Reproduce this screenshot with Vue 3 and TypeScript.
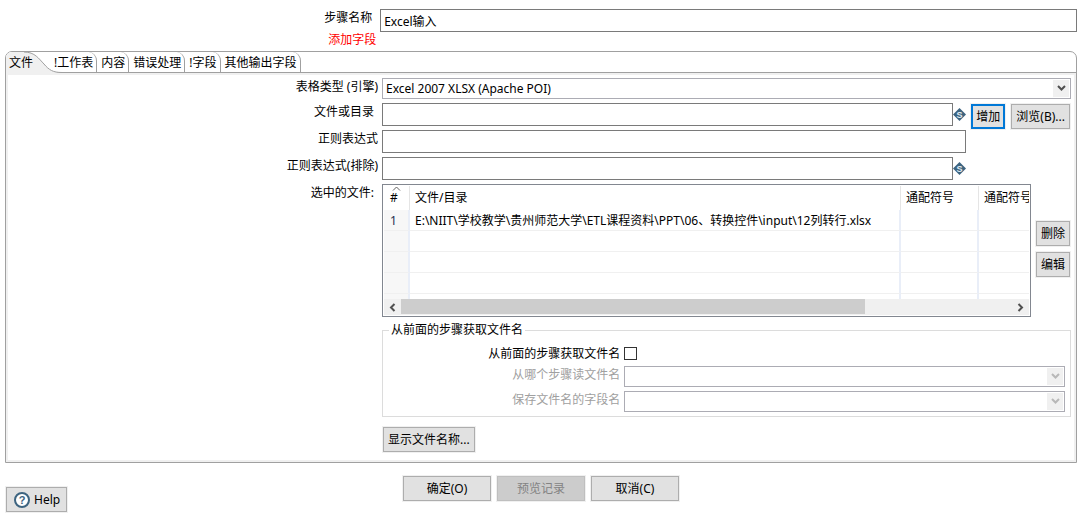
<script setup lang="ts">
import { ref } from 'vue'

interface FileRow {
  path: string
  mask: string
  exclude: string
}

const stepName = ref('Excel输入')
const engine = ref('Excel 2007 XLSX (Apache POI)')
const fileOrDir = ref('')
const mask = ref('')
const excludeMask = ref('')
const acceptFromStep = ref(false)
const tabs: string[] = ['!工作表', '内容', '错误处理', '!字段', '其他输出字段']
const rows: FileRow[] = [
  { path: 'E:\\NIIT\\学校教学\\贵州师范大学\\ETL课程资料\\PPT\\06、转换控件\\input\\12列转行.xlsx', mask: '', exclude: '' },
]
const emptyRows = 4
</script>

<template>
  <main class="dialog">
    <div class="line">
      <label class="lbl far" for="step">步骤名称</label>
      <input id="step" v-model="stepName" class="text" type="text" />
    </div>
    <div class="line note"><span class="lbl">添加字段</span></div>

    <section class="folder">
      <div class="tabs" role="tablist">
        <button class="tab active" role="tab" aria-selected="true" type="button">
          <svg class="curve" width="56" height="22" viewBox="0 0 56 22" aria-hidden="true">
            <path d="M0 0H20C29 0 33 7 38 12C43 18 47 20.500 56 20.500V22H0Z" fill="#f0f0f0" />
            <path d="M18 0C29 0 33 7 38 12C43 18 47 20.500 56 20.500" fill="none" stroke="#a0a0a0" />
          </svg>
          <span>文件</span>
        </button>
        <button v-for="t in tabs" :key="t" class="tab" role="tab" aria-selected="false" type="button">{{ t }}</button>
        <div class="rest"></div>
      </div>

      <div class="panel">
        <div class="line">
          <label class="lbl" for="engine">表格类型 (引擎)</label>
          <div class="combo">
            <select id="engine" v-model="engine"><option>Excel 2007 XLSX (Apache POI)</option></select>
            <span class="drop"><svg width="9" height="7" viewBox="0 0 9 7"><path d="M1 1L4.500 4.500L8 1" /></svg></span>
          </div>
        </div>

        <div class="sources">
          <label class="lbl far" for="file">文件或目录</label>
          <div class="var">
            <input id="file" v-model="fileOrDir" class="text" type="text" />
            <svg width="13" height="13" viewBox="0 0 13 13"><path d="M6.500 0L13 6.500L6.500 13L0 6.500Z" fill="#3d6480" /><text x="6.500" y="10" text-anchor="middle">S</text></svg>
          </div>
          <div class="actions">
            <button class="btn focus" type="button">增加</button>
            <button class="btn" type="button">浏览(B)...</button>
          </div>
          <label class="lbl" for="mask">正则表达式</label>
          <input id="mask" v-model="mask" class="text" type="text" />
          <label class="lbl" for="exclude">正则表达式(排除)</label>
          <div class="var">
            <input id="exclude" v-model="excludeMask" class="text" type="text" />
            <svg width="13" height="13" viewBox="0 0 13 13"><path d="M6.500 0L13 6.500L6.500 13L0 6.500Z" fill="#3d6480" /><text x="6.500" y="10" text-anchor="middle">S</text></svg>
          </div>
        </div>

        <div class="line">
          <span id="files-label" class="lbl far">选中的文件:</span>
          <div class="files">
            <div class="grid">
              <div class="view">
                <table aria-labelledby="files-label">
                  <colgroup><col class="c-num" /><col /><col class="c-mask" /><col class="c-mask" /></colgroup>
                  <thead>
                    <tr>
                      <th class="num">
                        <svg class="sort" width="9" height="5" viewBox="0 0 9 5" aria-hidden="true"><path d="M1 4.500L4.500 1L8 4.500" /></svg>#
                      </th>
                      <th>文件/目录</th>
                      <th>通配符号</th>
                      <th>通配符号</th>
                    </tr>
                  </thead>
                  <tbody>
                    <tr v-for="(r, i) in rows" :key="r.path">
                      <td class="num">{{ i + 1 }}</td>
                      <td>{{ r.path }}</td>
                      <td>{{ r.mask }}</td>
                      <td>{{ r.exclude }}</td>
                    </tr>
                    <tr v-for="n in emptyRows" :key="n"><td class="num"></td><td></td><td></td><td></td></tr>
                  </tbody>
                </table>
              </div>
              <div class="scroll">
                <button type="button" aria-label="向左"><svg width="7" height="9" viewBox="0 0 7 9"><path d="M5.500 1L2 4.500L5.500 8" /></svg></button>
                <div class="track"><div class="thumb"></div></div>
                <button type="button" aria-label="向右"><svg width="7" height="9" viewBox="0 0 7 9"><path d="M1.500 1L5 4.500L1.500 8" /></svg></button>
              </div>
            </div>
            <div class="side">
              <button class="btn" type="button">删除</button>
              <button class="btn" type="button">编辑</button>
            </div>
          </div>
        </div>

        <div class="line">
          <span></span>
          <fieldset>
            <legend>从前面的步骤获取文件名</legend>
            <div class="line check">
              <label class="lbl" for="accept">从前面的步骤获取文件名</label>
              <input id="accept" v-model="acceptFromStep" type="checkbox" />
            </div>
            <div class="line">
              <label class="lbl off" for="from">从哪个步骤读文件名</label>
              <div class="combo off">
                <select id="from" disabled></select>
                <span class="drop"><svg width="9" height="7" viewBox="0 0 9 7"><path d="M1 1L4.500 4.500L8 1" /></svg></span>
              </div>
            </div>
            <div class="line">
              <label class="lbl off" for="field">保存文件名的字段名</label>
              <div class="combo off">
                <select id="field" disabled></select>
                <span class="drop"><svg width="9" height="7" viewBox="0 0 9 7"><path d="M1 1L4.500 4.500L8 1" /></svg></span>
              </div>
            </div>
          </fieldset>
        </div>

        <div class="line show">
          <span></span>
          <div><button class="btn" type="button">显示文件名称...</button></div>
        </div>
      </div>
    </section>

    <footer>
      <div class="help">
        <button class="btn" type="button">
          <svg width="16" height="16" viewBox="0 0 16 16" aria-hidden="true">
            <circle cx="8" cy="8" r="7" fill="#fff" stroke="#3d6480" stroke-width="2" />
            <text x="8" y="12" text-anchor="middle">?</text>
          </svg>
          Help
        </button>
      </div>
      <div class="main">
        <button class="btn" type="button">确定(O)</button>
        <button class="btn" type="button" disabled>预览记录</button>
        <button class="btn" type="button">取消(C)</button>
      </div>
    </footer>
  </main>
</template>

<style>
body {
  margin: 0;
  background: #fff;
}
</style>

<style scoped>
* {
  box-sizing: border-box;
}
.dialog {
  padding: 9px 5px 5px;
  font: 12px/16px 'Noto Sans', 'Noto Sans CJK SC', sans-serif;
  color: #000;
}
button,
input,
select {
  font: inherit;
  color: inherit;
  margin: 0;
}
.line {
  display: grid;
  grid-template-columns: 35% minmax(0, 1fr);
  margin-bottom: 4px;
}
.lbl {
  padding: 1px 4px 0 0;
  text-align: right;
  white-space: nowrap;
}
.lbl.far {
  padding-right: 8px;
}
.lbl.off {
  color: #a0a0a0;
}
.note {
  margin: -5px 0 3px;
  color: #f00;
}
.text {
  width: 100%;
  min-width: 0;
  height: 23px;
  padding: 0 3px;
  border: 1px solid #7a7a7a;
  border-radius: 0;
  background: #fff;
  outline: 0;
}
.folder {
  border: 1px solid #a0a0a0;
  border-radius: 7px 7px 0 0;
  overflow: hidden;
}
.tabs {
  display: flex;
  height: 21px;
}
.tab {
  padding: 1px 3px 0 4px;
  border: 0;
  border-right: 1px solid #a0a0a0;
  border-bottom: 1px solid #a0a0a0;
  border-top-right-radius: 8px 9px;
  background: #fff;
  line-height: 16px;
  white-space: nowrap;
}
.tab.active {
  position: relative;
  width: 44px;
  padding: 0 0 0 3px;
  border: 0;
  text-align: left;
}
.tab.active span {
  position: relative;
}
.curve {
  position: absolute;
  left: 0;
  top: 0;
  height: 22px;
}
.rest {
  flex: 1;
  border-bottom: 1px solid #a0a0a0;
}
.panel {
  padding: 3px 3px 4px;
  border: 2px solid #f0f0f0;
}
.combo {
  position: relative;
  height: 21px;
}
.combo select {
  display: block;
  width: 100%;
  height: 21px;
  padding: 0 24px 0 3px;
  appearance: none;
  border: 1px solid #acacb4;
  border-radius: 0;
  background: #fff;
  opacity: 1;
}
.drop {
  position: absolute;
  right: 2px;
  top: 2px;
  display: grid;
  place-items: center;
  width: 16px;
  height: 17px;
  background: #f0f0f0;
  pointer-events: none;
}
.drop path,
.scroll path {
  fill: none;
  stroke: #505050;
  stroke-width: 2;
}
.combo.off path {
  stroke: #b8b8b8;
}
.sources {
  display: grid;
  grid-template-columns: 35% minmax(0, 1fr) auto;
  grid-auto-rows: 23px;
  row-gap: 4px;
  margin-bottom: 4px;
}
.var {
  display: flex;
  align-items: center;
}
.var .text {
  flex: 1;
}
.var text {
  font: bold 9px 'Liberation Sans', sans-serif;
  fill: #e4edf3;
}
.actions {
  grid-column: 3;
  grid-row: 1 / span 2;
  display: flex;
  align-items: flex-start;
  gap: 6px;
  padding: 1px 1px 0 5px;
}
.btn {
  height: 25px;
  padding: 0 4px;
  border: 1px solid #adadad;
  border-radius: 0;
  background: #e1e1e1;
  box-shadow: 0 0 0 1px #f0f0f0;
  white-space: nowrap;
}
.btn.focus {
  padding: 0 3px;
  border: 2px solid #0078d7;
}
.btn:disabled {
  border-color: #bfbfbf;
  background: #ccc;
  color: #838383;
}
.files {
  display: flex;
  gap: 5px;
  padding-right: 1px;
}
.grid {
  flex: 1;
  min-width: 0;
  padding: 1px;
  border: 1px solid #828790;
}
.view {
  height: 113px;
  overflow: hidden;
}
table {
  width: calc(100% + 28px);
  table-layout: fixed;
  border-collapse: separate;
  border-spacing: 0;
}
.c-num {
  width: 26px;
}
.c-mask {
  width: 78px;
}
th {
  height: 24px;
  padding: 0 5px;
  border-right: 1px solid #e5e5e5;
  font-weight: normal;
  text-align: left;
  white-space: nowrap;
}
td {
  height: 21px;
  padding: 1px 5px 0;
  border-right: 2px solid #e9eef8;
  border-bottom: 1px solid #f0f0f0;
  white-space: nowrap;
}
th.num {
  position: relative;
  padding: 0 6px;
}
td.num {
  padding: 1px 6px 0;
  background: #f7f7f7;
  color: #1f3050;
}
.sort {
  position: absolute;
  left: 8px;
  top: 0;
}
.sort path {
  fill: none;
  stroke: #606060;
}
.scroll {
  display: flex;
  height: 16px;
  background: #f0f0f0;
}
.scroll button {
  display: grid;
  place-items: center;
  width: 17px;
  padding: 0;
  border: 0;
  background: none;
}
.track {
  flex: 1;
}
.thumb {
  width: 76%;
  height: 15px;
  background: #cdcdcd;
}
.side {
  display: flex;
  flex-direction: column;
  gap: 6px;
  padding-top: 37px;
}
fieldset {
  min-width: 0;
  margin: 1px 0 0;
  padding: 8px 5px 0 4px;
  border: 1px solid #dcdcdc;
}
legend {
  margin-left: 2px;
  padding: 0 2px;
}
.check .lbl {
  padding-top: 0;
}
.check input {
  width: 13px;
  height: 13px;
  margin-top: 1px;
  appearance: none;
  border: 1px solid #333;
  background: #fff;
}
.check input:checked {
  background: #333;
}
.show {
  margin-top: 10px;
}
.show .btn {
  margin-left: 1px;
}
footer {
  display: grid;
  grid-template-columns: 1fr auto 1fr;
  padding-top: 13px;
}
.help {
  padding: 11px 0 0 1px;
}
.help .btn {
  display: flex;
  align-items: center;
  gap: 4px;
  padding: 0 6px 0 7px;
}
.help text {
  font: bold 11px 'Liberation Sans', sans-serif;
  fill: #3d6480;
}
.main {
  display: flex;
  gap: 6px;
}
.main .btn {
  width: 88px;
}
</style>
